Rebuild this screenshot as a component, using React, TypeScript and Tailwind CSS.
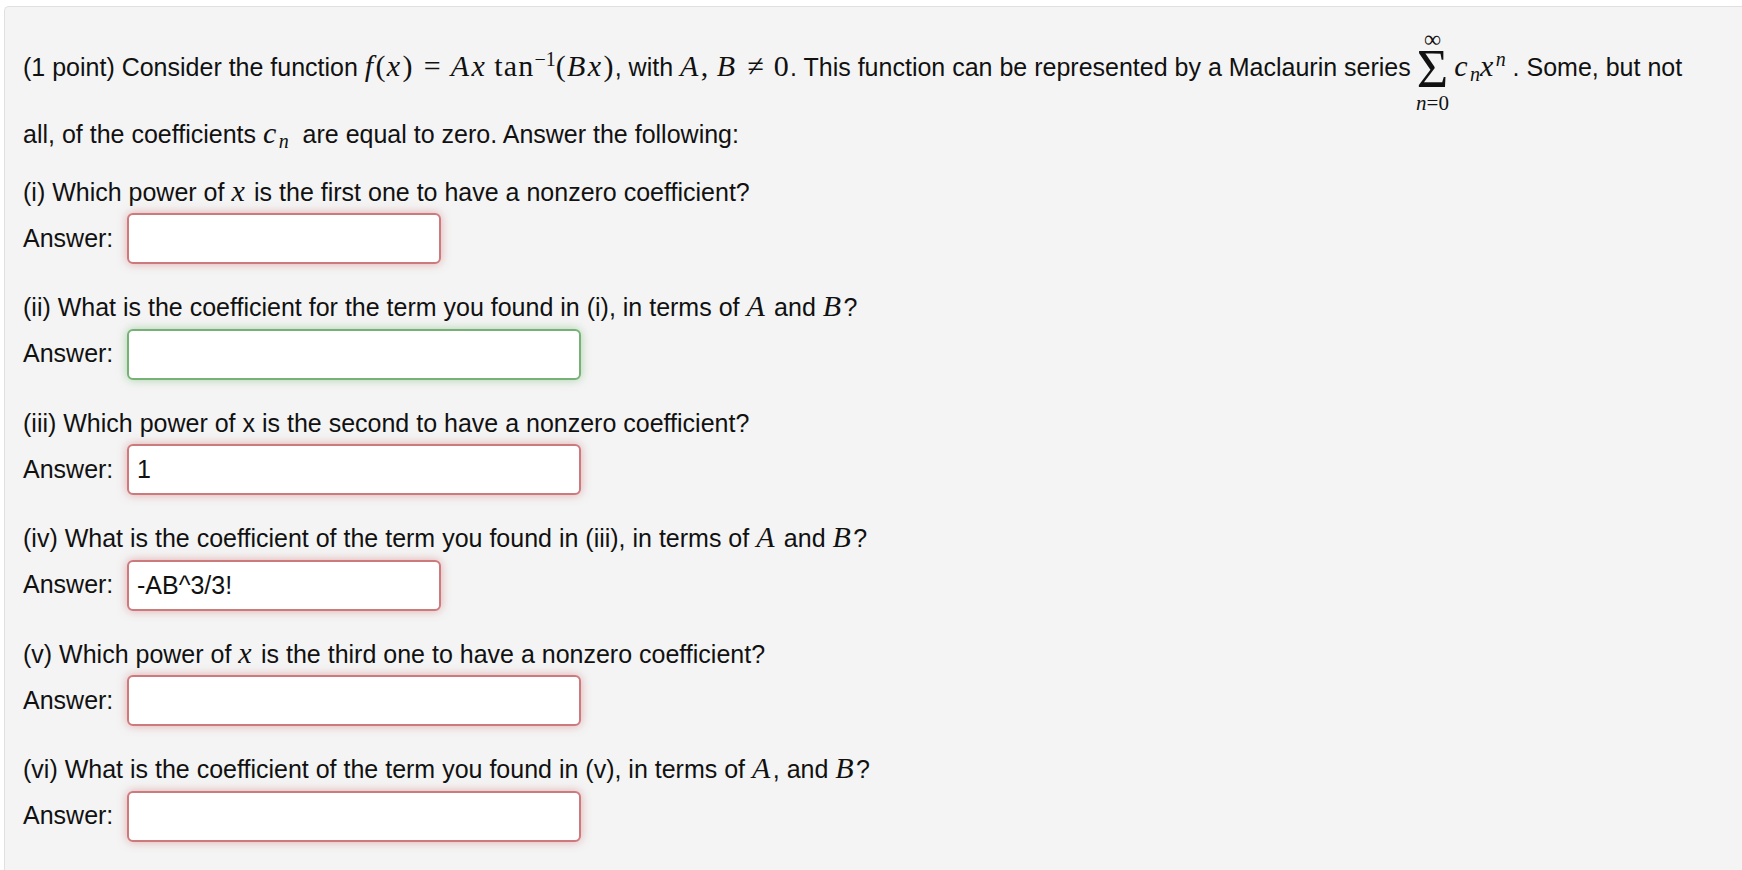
import React from 'react';

// Math helpers, MathJax-like serif look
function Mi({ children }: { children: React.ReactNode }) {
    return (
        <span className="font-['Liberation_Serif','DejaVu_Serif',serif] italic text-[30px] leading-none tracking-[0.08em]">
            {children}
        </span>
    );
}

function Mn({ children }: { children: React.ReactNode }) {
    return (
        <span className="font-['Liberation_Serif','DejaVu_Serif',serif] text-[30px] leading-none tracking-[0.04em]">
            {children}
        </span>
    );
}

function Op({ children }: { children: React.ReactNode }) {
    return (
        <span className="font-['Liberation_Serif','DejaVu_Serif',serif] text-[30px] leading-none mx-[10px]">
            {children}
        </span>
    );
}

function Sum() {
    return (
        <span className="relative inline-block align-middle mx-[6px] font-['Liberation_Serif','DejaVu_Serif',serif] leading-none">
            <span className="absolute left-1/2 -translate-x-1/2 top-[-22px] text-[24px] leading-none">∞</span>
            <span className="block text-[54px] leading-[40px]">Σ</span>
            <span className="absolute left-1/2 -translate-x-1/2 top-[44px] text-[21px] leading-none whitespace-nowrap">
                <span className="italic">n</span>=0
            </span>
        </span>
    );
}

interface Block {
    question: React.ReactNode;
    value: string;
    width: string;
    ok?: boolean;
}

const blocks: Block[] = [
    {
        question: (
            <>
                (i) Which power of <Mi>x</Mi> is the first one to have a nonzero coefficient?
            </>
        ),
        value: '',
        width: 'w-[314px]',
    },
    {
        question: (
            <>
                (ii) What is the coefficient for the term you found in (i), in terms of <Mi>A</Mi> and <Mi>B</Mi>?
            </>
        ),
        value: '',
        width: 'w-[454px]',
        ok: true,
    },
    {
        question: <>(iii) Which power of x is the second to have a nonzero coefficient?</>,
        value: '1',
        width: 'w-[454px]',
    },
    {
        question: (
            <>
                (iv) What is the coefficient of the term you found in (iii), in terms of <Mi>A</Mi> and <Mi>B</Mi>?
            </>
        ),
        value: '-AB^3/3!',
        width: 'w-[314px]',
    },
    {
        question: (
            <>
                (v) Which power of <Mi>x</Mi> is the third one to have a nonzero coefficient?
            </>
        ),
        value: '',
        width: 'w-[454px]',
    },
    {
        question: (
            <>
                (vi) What is the coefficient of the term you found in (v), in terms of <Mi>A</Mi>, and <Mi>B</Mi>?
            </>
        ),
        value: '',
        width: 'w-[454px]',
    },
];

const subCls = "font-['Liberation_Serif',serif] italic text-[20px] leading-none";

export default function App() {
    return (
        <div className="h-[870px] overflow-hidden bg-white pt-[6px] pl-[4px] font-['Liberation_Sans',Arial,sans-serif] text-[25px] text-[#111]">
            <div className="h-[864px] rounded-tl-[5px] border-t border-l border-[#e0e0e0] bg-[#f4f4f4] pl-[18px] pr-[20px] pt-[27px]">
                <p className="leading-[67px] whitespace-nowrap">
                    (1 point) Consider the function <Mi>f</Mi>
                    <Mn>(</Mn>
                    <Mi>x</Mi>
                    <Mn>)</Mn>
                    <Op>=</Op>
                    <Mi>Ax</Mi>
                    <Mn>&thinsp;tan</Mn>
                    <sup className="font-['Liberation_Serif',serif] text-[20px] leading-none">−1</sup>
                    <Mn>(</Mn>
                    <Mi>Bx</Mi>
                    <Mn>)</Mn>, with <Mi>A</Mi>
                    <Mn>,&thinsp;</Mn>
                    <Mi>B</Mi>
                    <Op>≠</Op>
                    <Mn>0</Mn>. This function can be represented by a Maclaurin series
                    <Sum />
                    <Mi>c</Mi>
                    <sub className={subCls}>n</sub>
                    <Mi>x</Mi>
                    <sup className={subCls}>n</sup> . Some, but not
                    <br />
                    all, of the coefficients <Mi>c</Mi>
                    <sub className={subCls}>n</sub>&nbsp; are equal to zero. Answer the following:
                </p>

                <div className="mt-[4px] flex flex-col gap-[23.5px]">
                    {blocks.map((b, i) => (
                        <div key={i} className="flex flex-col">
                            <div className="h-[41px] flex items-center whitespace-nowrap">
                                <span>{b.question}</span>
                            </div>
                            <div className="flex items-center h-[51px]">
                                <span className="w-[104px] shrink-0">Answer:</span>
                                <input
                                    readOnly
                                    defaultValue={b.value}
                                    className={`${b.width} h-[51px] rounded-[6px] border-2 bg-white px-[8px] text-[25px] text-[#111] outline-none ${
                                        b.ok
                                            ? 'border-[#76b176] shadow-[0_0_10px_rgba(100,175,100,0.5)]'
                                            : 'border-[#cc7a7c] shadow-[0_0_10px_rgba(205,100,105,0.5)]'
                                    }`}
                                />
                            </div>
                        </div>
                    ))}
                </div>
            </div>
        </div>
    );
}
